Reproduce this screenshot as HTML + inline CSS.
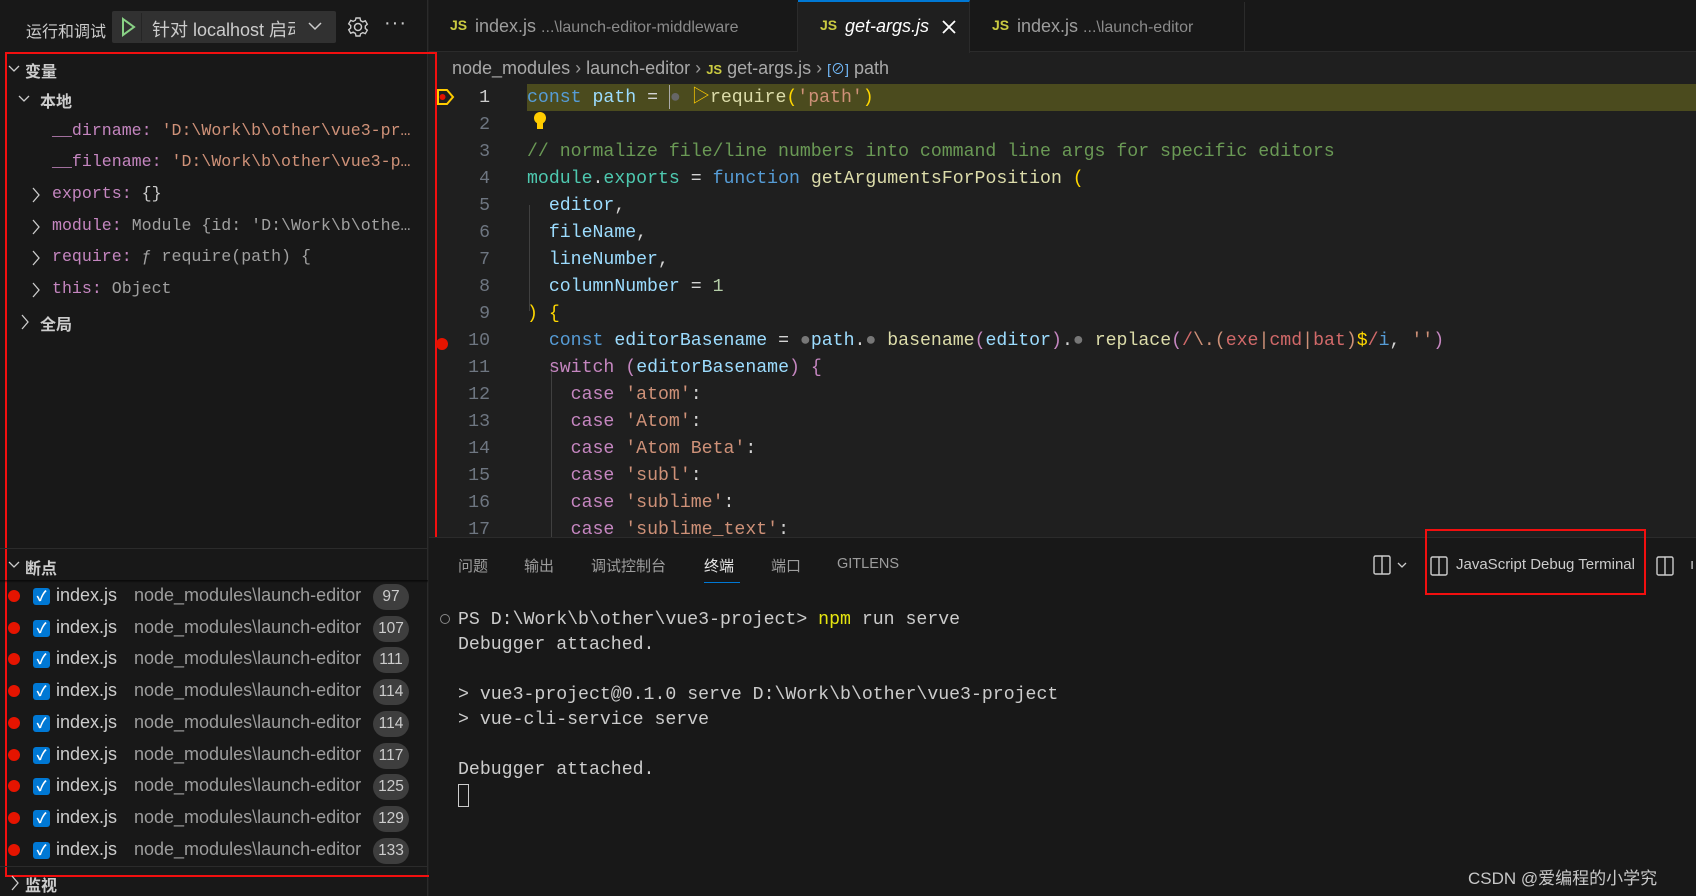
<!DOCTYPE html>
<html><head><meta charset="utf-8"><style>
*{margin:0;padding:0;box-sizing:border-box}
body{width:1696px;height:896px;background:#1f1f1f;overflow:hidden;position:relative;font-family:"Liberation Sans","Noto Sans CJK SC",sans-serif;color:#ccc}
.a{position:absolute;white-space:pre}
.mono{font-family:"Liberation Mono","Noto Sans CJK SC",monospace}
.side{position:absolute;left:0;top:0;width:428px;height:896px;background:#181818;border-right:1px solid #2b2b2b}
.cjk{font-family:"Liberation Sans","Noto Sans CJK SC",sans-serif}
.v{font-size:16.6px;line-height:20px}
.code{font-size:18.2px;line-height:27px;color:#9cdcfe}
.ln{position:absolute;width:60px;text-align:right;left:430px;color:#6e7681;font-family:"Liberation Mono",monospace;font-size:18.2px;line-height:27px}
.k{color:#569cd6}.f{color:#dcdcaa}.s{color:#ce9178}.c{color:#6a9955}.p{color:#c586c0}.n{color:#b5cea8}.y{color:#ffd700}.t{color:#4ec9b0}.w{color:#d4d4d4}.r{color:#d16969}
.bp{position:absolute;left:0;width:428px;height:31px}
.dot{position:absolute;left:8px;top:9px;width:12px;height:12px;border-radius:50%;background:#e51400}
.cb{position:absolute;left:33px;top:7px;width:17px;height:17px;background:#0078d4;border-radius:3px;color:#fff;font-size:14px;line-height:17px;text-align:center;font-weight:bold}
.bn{position:absolute;left:56px;top:4px;font-size:18px;color:#ccc}
.bpth{position:absolute;left:134px;top:4px;font-size:18px;color:#9d9d9d}
.badge{position:absolute;left:373px;top:3px;min-width:36px;height:26px;border-radius:13px;background:#3e3e3e;color:#ccc;font-size:15.5px;line-height:26px;text-align:center;padding:0 4px}
.term{font-size:18.2px;line-height:25px;color:#ccc}
.chev{position:absolute}
</style></head><body>
<div class="side"></div>
<div class="a cjk" style="left:26px;top:18px;font-size:16px;color:#ccc">运行和调试</div>
<div class="a" style="left:112px;top:11px;width:224px;height:32px;background:#313131;border-radius:2px"></div>
<svg class="a" style="left:120px;top:17px" width="16" height="20"><path d="M3 2 L14 10 L3 18 Z" fill="none" stroke="#89d185" stroke-width="2"/></svg>
<div class="a" style="left:141px;top:13px;height:28px;border-left:1px solid #252525"></div>
<div class="a cjk" style="left:152px;top:16px;font-size:18px;color:#ccc">针对 localhost 启<span style="display:inline-block;width:8px;overflow:hidden;vertical-align:bottom">动</span></div>
<svg class="a" style="left:308px;top:20px" width="14" height="12"><path d="M1 3 L7 9 L13 3" fill="none" stroke="#ccc" stroke-width="1.5"/></svg>
<svg class="a" style="left:347px;top:16px" width="22" height="22" viewBox="0 0 22 22"><circle cx="11" cy="11" r="3.5" fill="none" stroke="#ccc" stroke-width="1.5"/><path d="M9 2h4l.6 2.6 2.2 1.2 2.5-1 2 3.4-2 1.8v2.4l2 1.8-2 3.4-2.5-1-2.2 1.2L13 20H9l-.6-2.6-2.2-1.2-2.5 1-2-3.4 2-1.8V9.6l-2-1.8 2-3.4 2.5 1 2.2-1.2Z" fill="none" stroke="#ccc" stroke-width="1.4"/></svg>
<div class="a" style="left:384px;top:12px;font-size:20px;color:#ccc;letter-spacing:1px">···</div>

<div class="a" style="left:5px;top:52px;width:432px;height:825px;border:2px solid #f20f0f"></div>
<svg class="a" style="left:8px;top:64px" width="12" height="10"><path d="M1 2 L6 7 L11 2" fill="none" stroke="#ccc" stroke-width="1.3"/></svg>
<div class="a cjk" style="left:25px;top:58px;font-size:16px;font-weight:bold;color:#ccc">变量</div>
<svg class="a" style="left:18px;top:94px" width="12" height="10"><path d="M1 2 L6 7 L11 2" fill="none" stroke="#ccc" stroke-width="1.3"/></svg>
<div class="a cjk" style="left:40px;top:88px;font-size:16px;font-weight:bold;color:#ccc">本地</div>
<div class="a mono v" style="left:52px;top:121px"><span style="color:#c586c0">__dirname:</span> <span class="s">'D:\Work\b\other\vue3-pr…</span></div>
<div class="a mono v" style="left:52px;top:152px"><span style="color:#c586c0">__filename:</span> <span class="s">'D:\Work\b\other\vue3-p…</span></div>
<svg class="chev" style="left:31px;top:187px" width="10" height="16"><path d="M2 1L8 8L2 15" fill="none" stroke="#ccc" stroke-width="1.3"/></svg>
<div class="a mono v" style="left:52px;top:184px"><span style="color:#c586c0">exports:</span> <span style="color:#ccc">{}</span></div>
<svg class="chev" style="left:31px;top:219px" width="10" height="16"><path d="M2 1L8 8L2 15" fill="none" stroke="#ccc" stroke-width="1.3"/></svg>
<div class="a mono v" style="left:52px;top:216px"><span style="color:#c586c0">module:</span> <span style="color:#a0a0a0">Module {id: 'D:\Work\b\othe…</span></div>
<svg class="chev" style="left:31px;top:250px" width="10" height="16"><path d="M2 1L8 8L2 15" fill="none" stroke="#ccc" stroke-width="1.3"/></svg>
<div class="a mono v" style="left:52px;top:247px"><span style="color:#c586c0">require:</span> <span style="color:#a0a0a0">ƒ require(path) {</span></div>
<svg class="chev" style="left:31px;top:282px" width="10" height="16"><path d="M2 1L8 8L2 15" fill="none" stroke="#ccc" stroke-width="1.3"/></svg>
<div class="a mono v" style="left:52px;top:279px"><span style="color:#c586c0">this:</span> <span style="color:#a0a0a0">Object</span></div>
<svg class="chev" style="left:20px;top:314px" width="10" height="16"><path d="M2 1L8 8L2 15" fill="none" stroke="#ccc" stroke-width="1.3"/></svg>
<div class="a cjk" style="left:40px;top:311px;font-size:16px;font-weight:bold;color:#ccc">全局</div>

<div class="a" style="left:0;top:548px;width:428px;height:1px;background:#2b2b2b"></div>
<svg class="a" style="left:8px;top:560px" width="12" height="10"><path d="M1 2 L6 7 L11 2" fill="none" stroke="#ccc" stroke-width="1.3"/></svg>
<div class="a cjk" style="left:25px;top:555px;font-size:16px;font-weight:bold;color:#ccc">断点</div>
<div class="a" style="left:0;top:580px;width:428px;height:3px;background:linear-gradient(#000a,transparent)"></div>

<div class="bp" style="top:581px"><div class="dot"></div><div class="cb">✓</div><div class="bn">index.js</div><div class="bpth">node_modules\launch-editor</div><div class="badge">97</div></div>
<div class="bp" style="top:613px"><div class="dot"></div><div class="cb">✓</div><div class="bn">index.js</div><div class="bpth">node_modules\launch-editor</div><div class="badge">107</div></div>
<div class="bp" style="top:644px"><div class="dot"></div><div class="cb">✓</div><div class="bn">index.js</div><div class="bpth">node_modules\launch-editor</div><div class="badge">111</div></div>
<div class="bp" style="top:676px"><div class="dot"></div><div class="cb">✓</div><div class="bn">index.js</div><div class="bpth">node_modules\launch-editor</div><div class="badge">114</div></div>
<div class="bp" style="top:708px"><div class="dot"></div><div class="cb">✓</div><div class="bn">index.js</div><div class="bpth">node_modules\launch-editor</div><div class="badge">114</div></div>
<div class="bp" style="top:740px"><div class="dot"></div><div class="cb">✓</div><div class="bn">index.js</div><div class="bpth">node_modules\launch-editor</div><div class="badge">117</div></div>
<div class="bp" style="top:771px"><div class="dot"></div><div class="cb">✓</div><div class="bn">index.js</div><div class="bpth">node_modules\launch-editor</div><div class="badge">125</div></div>
<div class="bp" style="top:803px"><div class="dot"></div><div class="cb">✓</div><div class="bn">index.js</div><div class="bpth">node_modules\launch-editor</div><div class="badge">129</div></div>
<div class="bp" style="top:835px"><div class="dot"></div><div class="cb">✓</div><div class="bn">index.js</div><div class="bpth">node_modules\launch-editor</div><div class="badge">133</div></div>
<div class="a" style="left:0;top:866px;width:428px;height:1px;background:#2b2b2b"></div>
<svg class="chev" style="left:10px;top:875px" width="10" height="16"><path d="M2 1L8 8L2 15" fill="none" stroke="#ccc" stroke-width="1.3"/></svg>
<div class="a cjk" style="left:25px;top:872px;font-size:16px;font-weight:bold;color:#ccc">监视</div>

<div class="a" style="left:429px;top:0;width:1267px;height:52px;background:#181818;border-bottom:1px solid #2b2b2b"></div>
<div class="a" style="left:429px;top:2px;width:369px;height:50px;border-right:1px solid #2b2b2b"></div>
<div class="a" style="left:450px;top:17px;font-size:14px;font-weight:bold;color:#cbcb41">JS</div>
<div class="a" style="left:475px;top:16px;font-size:18px;color:#9d9d9d">index.js <span style="font-size:16px;color:#8b8b8b">...\launch-editor-middleware</span></div>
<div class="a" style="left:798px;top:0;width:172px;height:53px;background:#1f1f1f;border-top:2px solid #0078d4;border-right:1px solid #2b2b2b"></div>
<div class="a" style="left:820px;top:17px;font-size:14px;font-weight:bold;color:#cbcb41">JS</div>
<div class="a" style="left:845px;top:16px;font-size:18px;color:#fff;font-style:italic">get-args.js</div>
<svg class="a" style="left:942px;top:20px" width="14" height="14"><path d="M1 1L13 13M13 1L1 13" stroke="#fff" stroke-width="1.8"/></svg>
<div class="a" style="left:970px;top:2px;width:275px;height:50px;border-right:1px solid #2b2b2b"></div>
<div class="a" style="left:992px;top:17px;font-size:14px;font-weight:bold;color:#cbcb41">JS</div>
<div class="a" style="left:1017px;top:16px;font-size:18px;color:#9d9d9d">index.js <span style="font-size:16px;color:#8b8b8b">...\launch-editor</span></div>

<div class="a" style="left:452px;top:58px;font-size:18px;color:#a9a9a9">node_modules <span style="color:#999">›</span> launch-editor <span style="color:#999">›</span> <b style="font-size:13px;color:#cbcb41">JS</b> get-args.js <span style="color:#999">›</span> <span style="color:#75beff;font-size:14px">[⊘]</span> path</div>

<div class="a" style="left:527px;top:84px;width:1169px;height:27px;background:#4b4b1e"></div>
<svg class="a" style="left:436px;top:88px" width="20" height="18"><path d="M2 2H11L17 9L11 16H2Z" fill="none" stroke="#ffcc00" stroke-width="2"/><circle cx="6.5" cy="9" r="3" fill="#e51400"/></svg>
<svg class="a" style="left:532px;top:111px" width="16" height="22"><circle cx="8" cy="7" r="6" fill="#ffcc00"/><rect x="5" y="12" width="6" height="6" fill="#ffcc00"/></svg>
<div class="a" style="left:436px;top:338px;width:12px;height:12px;border-radius:50%;background:#e51400"></div>
<div class="a" style="left:529px;top:205px;width:1px;height:106px;background:#404040"></div>
<div class="a" style="left:551px;top:367px;width:1px;height:170px;background:#404040"></div>

<div class="ln" style="top:85px;color:#ccc">1</div>
<div class="ln" style="top:112px">2</div>
<div class="ln" style="top:139px">3</div>
<div class="ln" style="top:166px">4</div>
<div class="ln" style="top:193px">5</div>
<div class="ln" style="top:220px">6</div>
<div class="ln" style="top:247px">7</div>
<div class="ln" style="top:274px">8</div>
<div class="ln" style="top:301px">9</div>
<div class="ln" style="top:328px">10</div>
<div class="ln" style="top:355px">11</div>
<div class="ln" style="top:382px">12</div>
<div class="ln" style="top:409px">13</div>
<div class="ln" style="top:436px">14</div>
<div class="ln" style="top:463px">15</div>
<div class="ln" style="top:490px">16</div>
<div class="ln" style="top:517px">17</div>

<div class="a mono code" style="left:527px;top:85px"><span class="k">const</span> path <span class="w">=</span> <span style="display:inline-block;width:1px;height:24px;background:#aaa;vertical-align:middle"></span><span style="color:#666">●</span> <span style="color:#ffcc00">▷</span><span class="f">require</span><span class="y">(</span><span class="s">'path'</span><span class="y">)</span></div>
<div class="a mono code" style="left:527px;top:139px"><span class="c">// normalize file/line numbers into command line args for specific editors</span></div>
<div class="a mono code" style="left:527px;top:166px"><span class="t">module</span><span class="w">.</span><span class="t">exports</span> <span class="w">=</span> <span class="k">function</span> <span class="f">getArgumentsForPosition</span> <span class="y">(</span></div>
<div class="a mono code" style="left:527px;top:193px">  editor<span class="w">,</span></div>
<div class="a mono code" style="left:527px;top:220px">  fileName<span class="w">,</span></div>
<div class="a mono code" style="left:527px;top:247px">  lineNumber<span class="w">,</span></div>
<div class="a mono code" style="left:527px;top:274px">  columnNumber <span class="w">=</span> <span class="n">1</span></div>
<div class="a mono code" style="left:527px;top:301px"><span class="y">)</span> <span class="y">{</span></div>
<div class="a mono code" style="left:527px;top:328px">  <span class="k">const</span> editorBasename <span class="w">=</span> <span style="color:#777">●</span>path<span class="w">.</span><span style="color:#777">●</span> <span class="f">basename</span><span class="p">(</span>editor<span class="p">)</span><span class="w">.</span><span style="color:#777">●</span> <span class="f">replace</span><span class="p">(</span><span class="r">/</span><span class="s">\.</span><span class="s">(</span><span class="r">exe</span><span class="s">|</span><span class="r">cmd</span><span class="s">|</span><span class="r">bat</span><span class="s">)</span><span class="y">$</span><span class="r">/</span><span class="k">i</span><span class="w">,</span> <span class="s">''</span><span class="p">)</span></div>
<div class="a mono code" style="left:527px;top:355px">  <span class="p">switch</span> <span class="p">(</span>editorBasename<span class="p">)</span> <span class="p">{</span></div>
<div class="a mono code" style="left:527px;top:382px">    <span class="p">case</span> <span class="s">'atom'</span><span class="w">:</span></div>
<div class="a mono code" style="left:527px;top:409px">    <span class="p">case</span> <span class="s">'Atom'</span><span class="w">:</span></div>
<div class="a mono code" style="left:527px;top:436px">    <span class="p">case</span> <span class="s">'Atom Beta'</span><span class="w">:</span></div>
<div class="a mono code" style="left:527px;top:463px">    <span class="p">case</span> <span class="s">'subl'</span><span class="w">:</span></div>
<div class="a mono code" style="left:527px;top:490px">    <span class="p">case</span> <span class="s">'sublime'</span><span class="w">:</span></div>
<div class="a mono code" style="left:527px;top:517px">    <span class="p">case</span> <span class="s">'sublime_text'</span><span class="w">:</span></div>

<div class="a" style="left:429px;top:537px;width:1267px;height:359px;background:#181818;border-top:1px solid #2b2b2b"></div>
<div class="a cjk" style="left:458px;top:555px;font-size:15px;color:#9d9d9d">问题</div>
<div class="a cjk" style="left:524px;top:555px;font-size:15px;color:#9d9d9d">输出</div>
<div class="a cjk" style="left:591px;top:555px;font-size:15px;color:#9d9d9d">调试控制台</div>
<div class="a cjk" style="left:704px;top:555px;font-size:15px;color:#e7e7e7">终端</div>
<div class="a" style="left:704px;top:582px;width:36px;height:1px;background:#0078d4"></div>
<div class="a cjk" style="left:771px;top:555px;font-size:15px;color:#9d9d9d">端口</div>
<div class="a" style="left:837px;top:556px;font-size:14.5px;color:#9d9d9d">GITLENS</div>
<svg class="a" style="left:1373px;top:554px" width="40" height="22"><rect x="1" y="2" width="16" height="18" rx="1.5" fill="none" stroke="#ccc" stroke-width="1.4"/><path d="M9 2V20" stroke="#ccc" stroke-width="1.4"/><path d="M25 9L29 13L33 9" fill="none" stroke="#ccc" stroke-width="1.3"/></svg>
<svg class="a" style="left:1430px;top:555px" width="20" height="22"><rect x="1" y="2" width="16" height="18" rx="1.5" fill="none" stroke="#ccc" stroke-width="1.4"/><path d="M9 2V20" stroke="#ccc" stroke-width="1.4"/></svg>
<div class="a" style="left:1456px;top:556px;font-size:15px;color:#ccc">JavaScript Debug Terminal</div>
<div class="a" style="left:1425px;top:529px;width:221px;height:66px;border:2px solid #f20f0f"></div>
<svg class="a" style="left:1656px;top:555px" width="20" height="22"><rect x="1" y="2" width="16" height="18" rx="1.5" fill="none" stroke="#ccc" stroke-width="1.4"/><path d="M9 2V20" stroke="#ccc" stroke-width="1.4"/></svg>
<div class="a" style="left:1690px;top:556px;font-size:15px;color:#ccc">ı</div>

<div class="a" style="left:440px;top:614px;width:10px;height:10px;border-radius:50%;border:1.5px solid #888"></div>
<div class="a mono term" style="left:458px;top:608px">PS D:\Work\b\other\vue3-project&gt; <span style="color:#e5e510">npm</span> run serve</div>
<div class="a mono term" style="left:458px;top:633px">Debugger attached.</div>
<div class="a mono term" style="left:458px;top:683px">&gt; vue3-project@0.1.0 serve D:\Work\b\other\vue3-project</div>
<div class="a mono term" style="left:458px;top:708px">&gt; vue-cli-service serve</div>
<div class="a mono term" style="left:458px;top:758px">Debugger attached.</div>
<div class="a" style="left:458px;top:784px;width:11px;height:23px;border:1.5px solid #ccc"></div>

<div class="a cjk" style="left:1468px;top:864px;font-size:17px;color:#c8c8c8">CSDN @爱编程的小学究</div>
</body></html>
